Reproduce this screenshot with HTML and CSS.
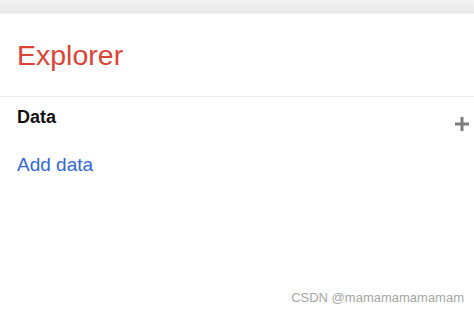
FILE: index.html
```html
<!DOCTYPE html>
<html lang="en">
<head>
<meta charset="utf-8">
<title>Explorer</title>
<link rel="stylesheet" href="styles.css">
</head>
<body>
<div class="page">
  <div class="topbar"></div>
  <header class="header">
    <h1 class="title">Explorer</h1>
  </header>
  <section class="section">
    <div class="section-head">
      <h2 class="section-title">Data</h2>
      <button class="add-btn" aria-label="Add">
        <svg width="16" height="16" viewBox="0 0 16 16"><rect x="6.5" y="1" width="3" height="14" fill="#7d7d7d"/><rect x="1" y="6.5" width="14" height="3" fill="#7d7d7d"/></svg>
      </button>
    </div>
    <a class="add-link" href="#">Add data</a>
  </section>
  <div class="watermark">CSDN @mamamamamamam</div>
</div>
</body>
</html>
```
FILE: styles.css
```css
html, body {
  margin: 0;
  padding: 0;
  background: #ffffff;
}
body {
  font-family: "Liberation Sans", Arial, sans-serif;
}
.page {
  position: relative;
  width: 474px;
  height: 312px;
  overflow: hidden;
}
.topbar {
  height: 14px;
  background: linear-gradient(#f3f3f3, #e9e9e9);
  border-bottom: 1px solid #f0f0f0;
  box-sizing: border-box;
}
.header {
  padding: 25px 17px 0;
  height: 83px;
  box-sizing: border-box;
  border-bottom: 1px solid #efefef;
}
.title {
  margin: 0;
  font-size: 28.5px;
  line-height: 32px;
  font-weight: normal;
  color: #db4437;
}
.section {
  padding: 9px 4px 0 17px;
}
.section-head {
  display: flex;
  justify-content: space-between;
  align-items: flex-start;
}
.section-title {
  margin: 0;
  font-size: 18px;
  line-height: 22px;
  font-weight: bold;
  color: #111;
}
.add-btn {
  margin: 10px 0 0;
  padding: 0;
  border: 0;
  background: none;
  width: 16px;
  height: 16px;
  display: flex;
}
.add-link {
  display: inline-block;
  margin-top: 22px;
  font-size: 19px;
  line-height: 22px;
  color: #3367d6;
  text-decoration: none;
}
.watermark {
  position: absolute;
  right: 10px;
  top: 290px;
  font-size: 13px;
  line-height: 15px;
  color: #a6a6a6;
}
```
